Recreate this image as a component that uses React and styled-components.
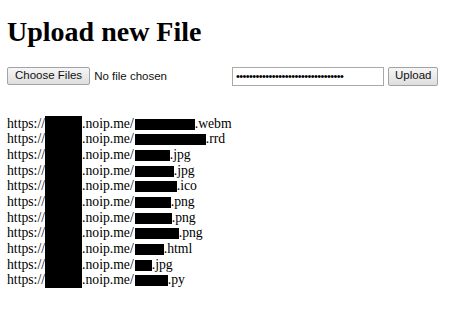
import React from 'react';
import styled, { createGlobalStyle } from 'styled-components';

const GlobalStyle = createGlobalStyle`
  html, body {
    background: #fff;
  }
  body {
    margin: 7px;
    font-family: "Liberation Serif", "Times New Roman", serif;
    color: #000;
  }
`;

const Title = styled.h1`
  margin: 9px 0 19px;
  font-size: 28px;
  font-weight: bold;
  line-height: 31.6px;
`;

const UploadForm = styled.form`
  display: flex;
  align-items: center;
  height: 19px;
  margin: 0;
  font-family: "Liberation Sans", Arial, sans-serif;
  font-size: 11.5px;
`;

const GrayButton = styled.button`
  box-sizing: border-box;
  height: ${(p) => p.h || 18}px;
  padding: 0 ${(p) => p.pad || 7}px;
  margin: 0;
  border: 1px solid #a3a3a3;
  border-radius: 2px;
  background: linear-gradient(#f6f6f6, #dedede);
  font-family: "Liberation Sans", Arial, sans-serif;
  font-size: 11.5px;
  color: #111;
  line-height: 1;
`;

const FileStatus = styled.span`
  margin-left: 4px;
  color: #111;
`;

const PasswordBox = styled.input`
  box-sizing: border-box;
  width: 152px;
  height: 19px;
  margin: 0 4px 0 65px;
  padding: 0 3px;
  border: 1px solid #a9a9a9;
  font-family: "Liberation Sans", Arial, sans-serif;
  font-size: 11px;
  letter-spacing: -0.6px;
  color: #000;
  outline: none;
`;

const FileList = styled.div`
  margin-top: 30px;
  font-size: 13.7px;
  line-height: 15.7px;
`;

const Line = styled.div`
  white-space: nowrap;
  height: 15.7px;
`;

const HostMask = styled.span`
  display: inline-block;
  width: 37px;
  height: 15.7px;
  background: #000;
  vertical-align: top;
`;

const NameMask = styled.span`
  display: inline-block;
  width: ${(p) => p.w}px;
  height: 11px;
  background: #000;
  vertical-align: -2px;
  margin-left: 1px;
`;

const files = [
  { w: 60, ext: 'webm' },
  { w: 71, ext: 'rrd' },
  { w: 35, ext: 'jpg' },
  { w: 39, ext: 'jpg' },
  { w: 42, ext: 'ico' },
  { w: 36, ext: 'png' },
  { w: 37, ext: 'png' },
  { w: 44, ext: 'png' },
  { w: 29, ext: 'html' },
  { w: 17, ext: 'jpg' },
  { w: 33, ext: 'py' }
];

const App = () => {
  return (
    <>
      <GlobalStyle />
      <Title>Upload new File</Title>
      <UploadForm onSubmit={(e) => e.preventDefault()}>
        <GrayButton type="button">Choose Files</GrayButton>
        <FileStatus>No file chosen</FileStatus>
        <PasswordBox type="password" defaultValue="aaaaaaaaaaaaaaaaaaaaaaaaaaaaaaaaa" />
        <GrayButton type="submit" h={19} pad={6}>
          Upload
        </GrayButton>
      </UploadForm>
      <FileList>
        {files.map((f, i) => (
          <Line key={i}>
            https://
            <HostMask />
            .noip.me/
            <NameMask w={f.w} />.{f.ext}
          </Line>
        ))}
      </FileList>
    </>
  );
};

export default App;
